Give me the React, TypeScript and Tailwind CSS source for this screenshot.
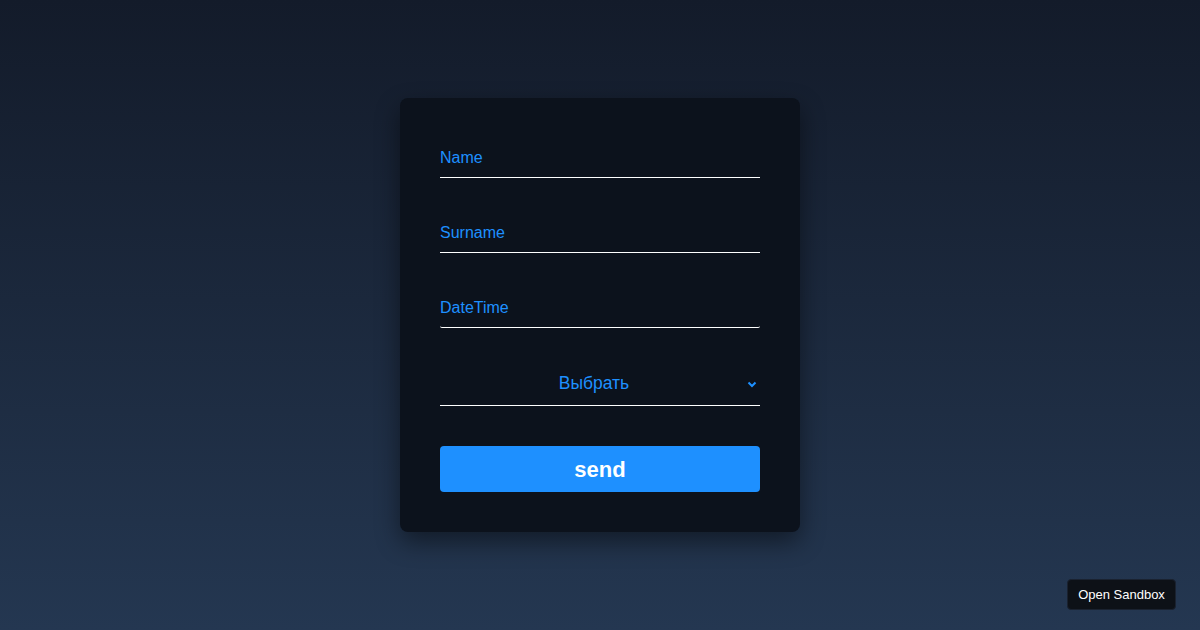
import React from "react";

export default function App() {
  return (
    <div
      className="relative flex h-[630px] w-full items-center justify-center bg-gradient-to-b from-[#131b2a] to-[#243751]"
      style={{ fontFamily: '"Liberation Sans", Arial, sans-serif' }}
    >
      <div className="flex w-[400px] flex-col rounded-lg bg-[#0c121c] px-10 py-10 shadow-[0_10px_25px_rgba(0,0,0,0.45)]">
        <div className="flex h-[40px] items-center border-b border-white pt-[1px] text-[16px] text-[#1e90ff]">Name</div>
        <div className="mt-[35px] flex h-[40px] items-center border-b border-white pt-[1px] text-[16px] text-[#1e90ff]">Surname</div>
        <div className="mt-[35px] flex h-[40px] items-center rounded-b-[2px] border-b border-white pt-[1px] text-[16px] text-[#1e90ff]">DateTime</div>
        <div className="relative mt-[38px] flex h-[40px] items-center justify-center border-b border-white pb-[4px] pr-[12px] text-[17.5px] text-[#1e90ff]">
          <span>Выбрать</span>
          <svg
            className="absolute right-[3px] top-[15px]"
            width="10"
            height="8"
            viewBox="0 0 10 8"
            fill="none"
            stroke="#1e90ff"
            strokeWidth="2"
          >
            <path d="M1.5 1.5l3.5 3.5L8.5 1.5" />
          </svg>
        </div>
        <button className="mt-10 h-[46px] rounded-[4px] bg-[#1e90ff] text-[22px] font-bold text-white">send</button>
      </div>
      <div className="absolute bottom-[20px] right-[24px] flex h-[31px] w-[109px] items-center justify-center rounded-[4px] border border-[#1a2230] bg-[#0d1117] text-[13px] text-white">
        Open Sandbox
      </div>
    </div>
  );
}
